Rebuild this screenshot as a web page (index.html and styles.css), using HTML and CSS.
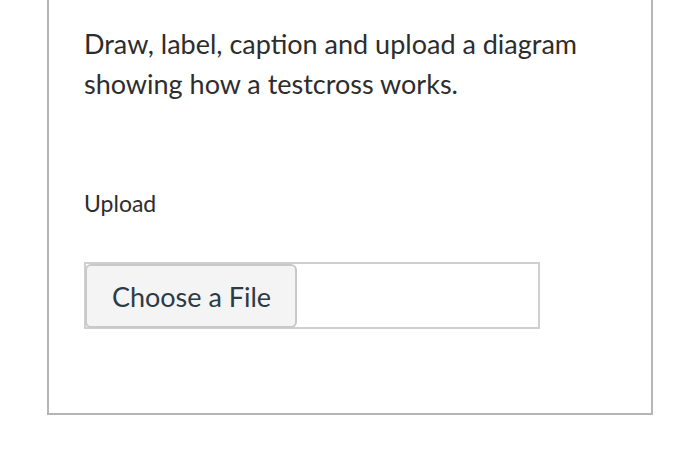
FILE: index.html
```html
<!DOCTYPE html>
<html>
<head>
<meta charset="utf-8">
<link rel="stylesheet" href="styles.css">
</head>
<body>
<div class="card">
  <p class="question">Draw, label, caption and upload a diagram showing how a testcross works.</p>
  <div class="label">Upload</div>
  <div class="file">
    <button class="choose">Choose a File</button>
  </div>
</div>
</body>
</html>
```
FILE: styles.css
```css
html, body { margin: 0; padding: 0; background: #fff; }
body { font-family: Lato, "Noto Sans", sans-serif; color: #2d2d2d; }
.card {
  margin-left: 47px;
  margin-top: -2px;
  width: 606px;
  height: 417px;
  border: 2px solid #b5b5b5;
  padding: 0 0 0 35px;
  box-sizing: border-box;
}
.question {
  margin: 24px 0 0 0;
  font-size: 27px;
  line-height: 40px;
  width: 540px;
}
.label {
  margin-top: 84px;
  font-size: 23px;
  line-height: 30px;
}
.file {
  margin-top: 44px;
  width: 456px;
  height: 67px;
  border: 2px solid #cfcfcf;
  box-sizing: border-box;
  display: flex;
}
.choose {
  margin: 0 0 0 -1px;
  width: 212px;
  height: 64px;
  border: 2px solid #c9c9c9;
  border-radius: 6px;
  background: #f4f4f4;
  font-family: Lato, sans-serif;
  font-size: 27px;
  color: #2d3b45;
  padding: 0 0 0 1px;
}
```
